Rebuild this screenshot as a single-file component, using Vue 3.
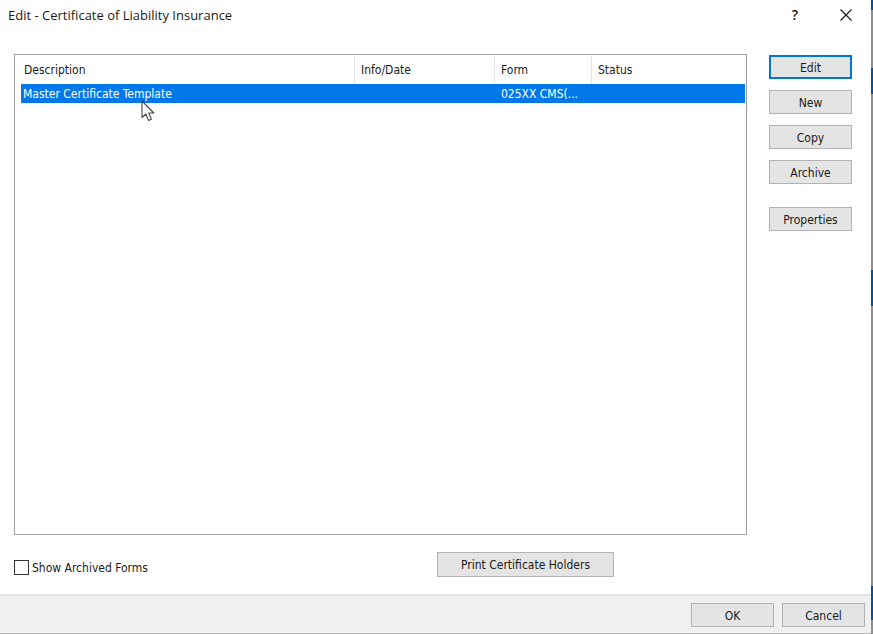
<script setup>
import { ref } from 'vue'

const columns = ['Description', 'Info/Date', 'Form', 'Status']
const rows = [
  { description: 'Master Certificate Template', info: '', form: '025XX CMS(...', status: '' },
]
const selected = ref(0)
const showArchived = ref(false)
</script>

<template>
  <div class="desktop">
    <section class="dialog" role="dialog" aria-labelledby="dialog-title">
      <header class="titlebar">
        <h1 id="dialog-title">Edit - Certificate of Liability Insurance</h1>
        <button class="caption help" type="button">?</button>
        <button class="caption" type="button" aria-label="Close">
          <svg width="12" height="12" viewBox="0 0 12 12">
            <path d="M0.5 0.5L11.5 11.5M11.5 0.5L0.5 11.5" fill="none" stroke="#1c1c1c" stroke-width="1.2" />
          </svg>
        </button>
      </header>

      <main class="content">
        <div class="list">
          <table>
            <colgroup>
              <col class="c-description" />
              <col class="c-info" />
              <col class="c-form" />
              <col />
            </colgroup>
            <thead>
              <tr>
                <th v-for="column in columns" :key="column" scope="col">{{ column }}</th>
              </tr>
            </thead>
            <tbody>
              <tr
                v-for="(row, index) in rows"
                :key="row.description"
                :class="{ selected: index === selected }"
                @click="selected = index"
              >
                <td>{{ row.description }}</td>
                <td>{{ row.info }}</td>
                <td>{{ row.form }}</td>
                <td>{{ row.status }}</td>
              </tr>
            </tbody>
          </table>
          <svg class="pointer" width="14" height="22" viewBox="0 0 14 22">
            <path
              d="M1 1V17.5L4.8 14L7.6 20.5L10.4 19.3L7.7 13H12.8Z"
              fill="#fff"
              stroke="#444"
              stroke-width="1.1"
              stroke-linejoin="round"
            />
          </svg>
        </div>

        <nav class="actions">
          <button class="btn primary" type="button">Edit</button>
          <button class="btn" type="button">New</button>
          <button class="btn" type="button">Copy</button>
          <button class="btn" type="button">Archive</button>
          <button class="btn apart" type="button">Properties</button>
        </nav>

        <div class="options">
          <label class="check" for="show-archived">
            <input id="show-archived" v-model="showArchived" type="checkbox" />
            <span>Show Archived Forms</span>
          </label>
          <button class="btn print" type="button">Print Certificate Holders</button>
        </div>
      </main>

      <footer class="footer">
        <button class="btn" type="button">OK</button>
        <button class="btn" type="button">Cancel</button>
      </footer>
    </section>
    <div class="edge"></div>
  </div>
</template>

<style>
body {
  margin: 0;
  background: #fff;
}
</style>

<style scoped>
.desktop {
  display: flex;
  min-height: 100vh;
  font-family: "DejaVu Sans Condensed", "DejaVu Sans", sans-serif;
  font-size: 12px;
  line-height: 16px;
  color: #1a1a1a;
}

.dialog {
  flex: 1;
  min-width: 0;
  display: flex;
  flex-direction: column;
  box-sizing: border-box;
  background: #fff;
  border-bottom: 1px solid #b4b4b4;
}

.edge {
  width: 2px;
  background: linear-gradient(
    #0a4f94 0 10px,
    #8e8e8e 10px 68px,
    #0a4f94 68px 94px,
    #8e8e8e 94px 270px,
    #0a4f94 270px 306px,
    #8e8e8e 306px 586px,
    #0a4f94 586px 620px,
    #8e8e8e 620px
  );
}

.titlebar {
  display: flex;
  align-items: center;
  height: 30px;
  padding: 0 7px 0 8px;
  font-family: "Open Sans", "Noto Sans", sans-serif;
}

h1 {
  flex: 1;
  margin: 0;
  font-size: 13px;
  font-weight: 400;
}

.caption {
  display: flex;
  align-items: center;
  justify-content: center;
  width: 36px;
  height: 28px;
  padding: 0;
  border: 0;
  background: transparent;
  color: #1a1a1a;
}

.help {
  margin-right: 15px;
  font: 600 14px/16px "Open Sans", sans-serif;
}

.content {
  flex: 1;
  display: grid;
  grid-template-columns: minmax(0, 1fr) 83px;
  grid-template-rows: 1fr auto;
  column-gap: 22px;
  padding: 24px 19px 17px 14px;
}

.list {
  position: relative;
  border: 1px solid #a0a0a0;
  padding: 1px 1px 0 6px;
}

table {
  width: 100%;
  table-layout: fixed;
  border-collapse: collapse;
}

.c-description {
  width: 334px;
}

.c-info {
  width: 140px;
}

.c-form {
  width: 97px;
}

th {
  height: 28px;
  padding: 0 6px;
  box-sizing: border-box;
  box-shadow: inset -1px 0 #e4e4e4;
  text-align: left;
  font-weight: 400;
}

th:first-child {
  padding-left: 3px;
}

th:last-child {
  box-shadow: none;
}

td {
  height: 19px;
  padding: 0 6px;
  box-sizing: border-box;
  white-space: nowrap;
}

td:first-child {
  padding-left: 2px;
}

.selected {
  background: #0078ea;
  color: #fff;
}

.pointer {
  position: absolute;
  left: 126px;
  top: 45px;
}

.actions {
  display: flex;
  flex-direction: column;
  gap: 11px;
  padding-top: 1px;
}

.btn {
  width: 83px;
  height: 24px;
  padding: 1px 0 0;
  border: 1px solid #b2b2b2;
  border-radius: 0;
  background: #e4e4e4;
  color: #1a1a1a;
  font: inherit;
}

.primary {
  border: 2px solid #0078d7;
}

.apart {
  margin-top: 12px;
}

.options {
  display: flex;
  align-items: center;
  justify-content: space-between;
  padding: 17px 133px 0 0;
}

.check {
  display: flex;
  align-items: center;
  gap: 3px;
  padding-top: 6px;
}

.check input {
  appearance: none;
  width: 15px;
  height: 15px;
  margin: 0;
  border: 1px solid #333;
  background: #fff;
}

.check input:checked {
  background: #0078d7;
}

.print {
  width: 177px;
  height: 25px;
}

.footer {
  display: flex;
  justify-content: flex-end;
  gap: 8px;
  padding: 7px 6px 6px;
  border-top: 2px solid #e6e6e6;
  background: #f0f0f0;
}
</style>
